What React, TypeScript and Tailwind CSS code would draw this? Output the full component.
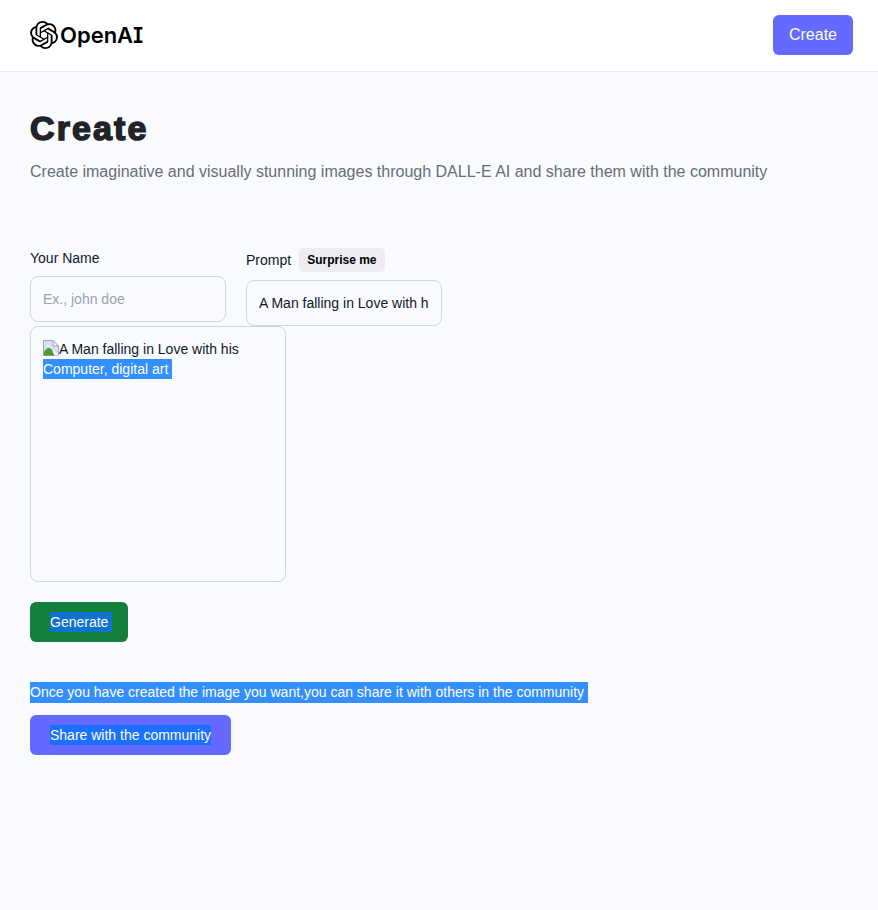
import { SiOpenai } from "react-icons/si";

const BrokenImage = () => (
  <svg className="inline-block align-[-2px]" width="16" height="16" viewBox="0 0 16 16">
    <path d="M0.5 0.5H10L15.5 6V15.5H0.5Z" fill="#d5e0f4" stroke="#a3a7ad" />
    <path d="M10 0.5V6H15.5Z" fill="#f4f5f7" stroke="#a3a7ad" />
    <path d="M1 15.5V11.5L5 7.5L9 9.5L11.5 15.5Z" fill="#4f9a3c" />
    <path d="M3 5.5L7 5.5L5 7.5Z" fill="#f4f6fb" />
    <path d="M9 9.5L16 15.5H11.5Z" fill="#f9fafe" />
  </svg>
);

const App = () => {
  return (
    <div className="min-h-[910px] bg-[#f9fafe] font-['Liberation_Sans',Arial,sans-serif] text-[#111827]">
      {/* Header */}
      <header className="flex h-[72px] items-center justify-between border-b border-b-[#e6ebf4] bg-white pb-px pl-[30px] pr-[25px]">
        <a className="flex items-center gap-[2px] text-black">
          <SiOpenai size={28} />
          <span className="font-['Inter',sans-serif] text-[22px] font-semibold leading-none [font-feature-settings:'ss02']">OpenAI</span>
        </a>
        <button className="h-10 w-20 rounded-md bg-[#6469ff] text-base text-white">Create</button>
      </header>

      <main className="px-[30px] pt-8">
        <h1 className="text-[34px] font-extrabold leading-[48px] tracking-[2.1px] text-[#222328] [-webkit-text-stroke:1.5px_#222328]">Create</h1>
        <p className="mt-2 text-base leading-6 text-[#666e75]">
          Create imaginative and visually stunning images through DALL-E AI and share them with the community
        </p>

        <form className="mt-16">
          {/* Fields */}
          <div className="flex items-start gap-5">
            <div className="w-[196px]">
              <label className="block text-sm leading-5">Your Name</label>
              <input
                className="mt-2 h-[46px] w-full rounded-lg border border-gray-300 bg-[#f9fafe] px-3 text-sm outline-none placeholder:text-gray-400"
                placeholder="Ex., john doe"
              />
            </div>
            <div className="w-[196px]">
              <div className="flex h-6 items-center gap-2">
                <label className="text-sm">Prompt</label>
                <span className="rounded-[5px] bg-[#ececf1] px-2 py-1 text-xs font-semibold leading-4 text-black">Surprise me</span>
              </div>
              <input
                className="mt-2 h-[46px] w-full rounded-lg border border-gray-300 bg-[#f9fafe] px-3 text-sm outline-none"
                value="A Man falling in Love with his Computer, digital art"
                readOnly
              />
            </div>
          </div>

          {/* Image preview */}
          <div className="h-64 w-64 rounded-lg border border-gray-300 bg-[#f9fafe] p-3 text-sm leading-5">
            <BrokenImage />A Man falling in Love with his{" "}
            <span className="inline-block bg-[#338fff] leading-5 text-white">Computer, digital art&nbsp;</span>
          </div>

          <button type="button" className="mt-5 block rounded-md bg-[#15803d] py-2.5 pl-5 pr-4 text-sm leading-5 text-white">
            <span className="inline-block bg-[#0f72ce] leading-5">Generate&nbsp;</span>
          </button>

          <p className="mt-10 text-sm leading-[21px] text-white">
            <span className="inline-block bg-[#338fff]">Once you have created the image you want,you can share it with others in the community&nbsp;</span>
          </p>
          <button type="button" className="mt-3 block rounded-md bg-[#6469ff] px-5 py-2.5 text-sm leading-5 text-white">
            <span className="inline-block bg-[#1a70ff] leading-5">Share with the community</span>
          </button>
        </form>
      </main>
    </div>
  );
};

export default App;
